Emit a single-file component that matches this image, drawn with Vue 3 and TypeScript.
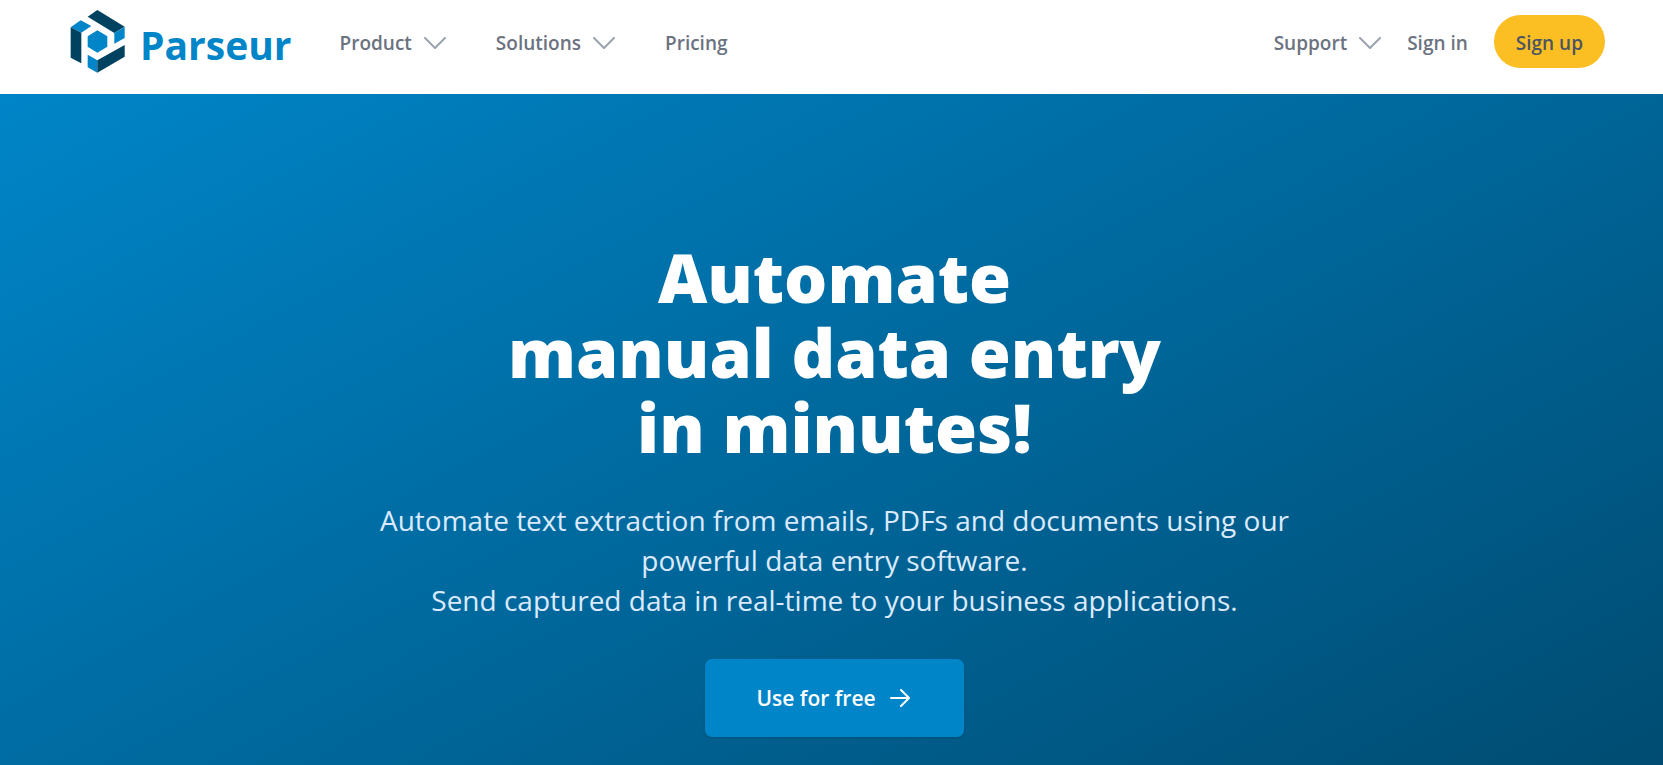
<script setup lang="ts">
interface NavItem {
  label: string
  menu: boolean
}

const mainNav: NavItem[] = [
  { label: 'Product', menu: true },
  { label: 'Solutions', menu: true },
  { label: 'Pricing', menu: false },
]
</script>

<template>
  <div class="page">
    <header class="header">
      <a class="brand" href="#">
        <svg class="mark" viewBox="30 15 168 192" aria-hidden="true">
          <path fill="#00425f" d="M83 35 112 15 194 65 163 84z" />
          <path fill="#0085c8" d="M163 84 194 66V99L163 116z" />
          <path fill="#0085c8" d="M32 67 62 46 94 63 64 83z" />
          <path fill="#00425f" d="M32 67 64 83V175L32 158z" />
          <path fill="#0085c8" d="M112 76 142 94V125L112 143 83 125V94z" />
          <path fill="#0085c8" d="M83 149 112 166V203L83 187z" />
          <path fill="#00425f" d="M112 166 194 120V155L112 203z" />
        </svg>
        <span class="name">Parseur</span>
      </a>
      <nav class="nav" aria-label="Main">
        <template v-for="item in mainNav" :key="item.label">
          <button v-if="item.menu" class="item" type="button">
            {{ item.label }}
            <svg class="chevron" viewBox="0 0 22 12" aria-hidden="true"><path d="M1 1 11 11 21 1" /></svg>
          </button>
          <a v-else class="item" href="#">{{ item.label }}</a>
        </template>
      </nav>
      <div class="account">
        <button class="item" type="button">
          Support
          <svg class="chevron" viewBox="0 0 22 12" aria-hidden="true"><path d="M1 1 11 11 21 1" /></svg>
        </button>
        <a class="item" href="#">Sign in</a>
        <a class="item signup" href="#">Sign up</a>
      </div>
    </header>
    <main class="hero">
      <h1>Automate<br />manual data entry<br />in minutes!</h1>
      <p>
        Automate text extraction from emails, PDFs and documents using our<br />
        powerful data entry software.<br />
        Send captured data in real-time to your business applications.
      </p>
      <a class="cta" href="#">
        Use for free
        <svg class="arrow" viewBox="0 0 20 18" aria-hidden="true"><path d="M1 9H19M11 1 19 9 11 17" /></svg>
      </a>
    </main>
  </div>
</template>

<style>
body {
  margin: 0;
}
</style>

<style scoped>
.page {
  display: flex;
  flex-direction: column;
  min-height: 100vh;
  font-family: 'Open Sans', 'Noto Sans', sans-serif;
}
.header {
  display: flex;
  align-items: flex-start;
  height: 94px;
  padding: 0 58px 0 70px;
  box-sizing: border-box;
  background: #fff;
}
.brand {
  display: flex;
  gap: 14px;
  padding-top: 10px;
  color: #0085c8;
  text-decoration: none;
}
.mark {
  width: 56px;
  height: 64px;
}
.name {
  font-size: 39px;
  font-weight: 700;
  line-height: 70px;
}
.nav {
  display: flex;
  gap: 50px;
  margin-left: 48px;
  padding-top: 15px;
}
.account {
  display: flex;
  gap: 26px;
  margin-left: auto;
  padding-top: 15px;
}
.item {
  display: flex;
  align-items: center;
  gap: 12px;
  padding: 0;
  border: 0;
  background: none;
  color: #6b7280;
  font-family: inherit;
  font-size: 19px;
  font-weight: 600;
  line-height: 56px;
  text-decoration: none;
  white-space: nowrap;
}
.chevron {
  width: 22px;
  height: 12px;
  fill: none;
  stroke: #9ca3af;
  stroke-width: 2;
  stroke-linecap: round;
  stroke-linejoin: round;
}
.signup {
  box-sizing: border-box;
  height: 53px;
  padding: 3px 22px 0;
  border-radius: 27px;
  background: #fbbf24;
  color: #4b5563;
}
.hero {
  flex: 1;
  display: flex;
  flex-direction: column;
  align-items: center;
  padding: 145px 0 28px 6px;
  background: linear-gradient(152deg, #0085c8, #004c72);
  text-align: center;
}
h1 {
  margin: 0;
  color: #fff;
  font-size: 68px;
  font-weight: 800;
  line-height: 75px;
}
p {
  margin: 36px 0 39px;
  color: #dbeafe;
  font-size: 28px;
  line-height: 40px;
}
.cta {
  display: flex;
  align-items: center;
  gap: 14px;
  padding: 0 54px 0 51px;
  border-radius: 7px;
  background: #0085c8;
  box-shadow: 0 1px 3px rgb(0 0 0 / 15%);
  color: #fff;
  font-size: 21px;
  font-weight: 600;
  line-height: 78px;
  text-decoration: none;
}
.arrow {
  width: 20px;
  height: 18px;
  fill: none;
  stroke: #fff;
  stroke-width: 2;
  stroke-linecap: round;
  stroke-linejoin: round;
}
</style>
